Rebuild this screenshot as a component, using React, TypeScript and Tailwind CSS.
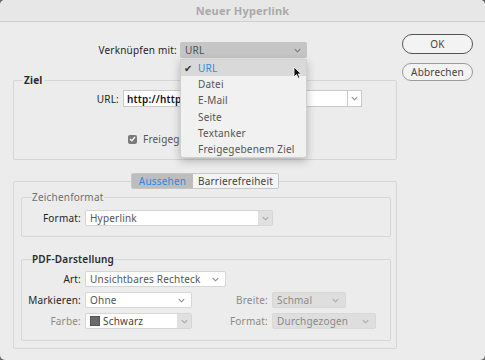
import type { ReactNode } from "react";

function Chevron({ className = "" }: { className?: string }) {
  return (
    <svg width="7" height="5" viewBox="0 0 7 5" className={className}>
      <path d="M0.8 1.2 L3.5 3.8 L6.2 1.2" fill="none" stroke="currentColor" strokeWidth="1.1" />
    </svg>
  );
}

function Select({
  width,
  children,
  arrowBox = false,
  disabled = false,
}: {
  width: string;
  children: ReactNode;
  arrowBox?: boolean;
  disabled?: boolean;
}) {
  return (
    <div
      className={`${width} h-[16px] flex items-center rounded-[2px] border ${
        disabled ? "bg-[#dedede] border-[#d8d8d8] text-[#8a8a8a]" : "bg-white border-[#d6d6d6] text-[#555]"
      }`}
    >
      <div className="flex-1 pl-[4px] flex items-center gap-[3px] truncate">{children}</div>
      {arrowBox ? (
        <div className="w-[14px] h-full bg-[#e0e0e0] flex items-center justify-center text-[#a5a5a5]">
          <Chevron />
        </div>
      ) : (
        <div className={`pr-[6px] flex items-center ${disabled ? "text-[#a9a9a9]" : "text-[#8c8c8c]"}`}>
          <Chevron />
        </div>
      )}
    </div>
  );
}

function Row({ label, gray = false, children }: { label: string; gray?: boolean; children: ReactNode }) {
  return (
    <div className="flex items-center h-[16px]">
      <span className={`w-[63px] text-right pr-[4px] ${gray ? "text-[#8a8a8a]" : "text-[#1f1f1f]"}`}>{label}</span>
      {children}
    </div>
  );
}

const menuItems = ["URL", "Datei", "E-Mail", "Seite", "Textanker", "Freigegebenem Ziel"];

export default function App() {
  return (
    <div className="w-[485px] h-[360px] bg-[#6a6a6a] font-['Noto_Sans',sans-serif] text-[10px] leading-[14px] tracking-[0.2px] text-[#1f1f1f]">
      <div className="h-full rounded-[5px] bg-[#ececec] overflow-hidden flex flex-col">
        <div className="h-[22px] shrink-0 border-b border-[#cfcfcf] bg-[#e7e7e7] flex items-center justify-center font-bold text-[11px] text-[#a9a9a9]">
          Neuer Hyperlink
        </div>

        <div className="flex flex-1 pl-[13px] pr-[12px]">
          <div className="w-[384px] flex flex-col">
            <div className="mt-[20px] flex items-center h-[16px]">
              <span className="w-[164px] text-right">Verknüpfen mit:</span>
              <div className="relative ml-[3px] w-[127px] h-[16px] rounded-[2px] bg-[#c5c5c5] flex items-center text-[#505050]">
                <span className="flex-1 pl-[5px]">URL</span>
                <Chevron className="mr-[6px] text-[#777]" />
                <div className="absolute left-0 top-[17px] w-[127px] h-[99px] bg-[#f1f1f1] border border-[#d0d0d0] rounded-b-[3px] shadow-[0_3px_8px_rgba(0,0,0,0.25)] z-10 flex flex-col">
                  {menuItems.map((item, i) => (
                    <div
                      key={item}
                      className={`h-[16.5px] flex items-center ${i === 0 ? "bg-[#d9d9d9] text-[#2b8be6]" : "text-[#555]"}`}
                    >
                      <span className="w-[17px] pl-[3px] text-[#333] text-[10px]">{i === 0 ? "✔" : ""}</span>
                      <span>{item}</span>
                    </div>
                  ))}
                  <svg width="9" height="13" viewBox="0 0 9 13" className="absolute left-[112px] top-[6px]">
                    <path d="M1 1 L1 11 L3.5 8.6 L5.2 12.2 L6.8 11.5 L5.2 8 L8.2 8 Z" fill="#111" stroke="#fff" strokeWidth="0.8" />
                  </svg>
                </div>
              </div>
            </div>

            <fieldset className="mt-[15px] h-[87px] border border-[#d6d6d6] rounded-[2px]">
              <legend className="ml-[9px] px-[1px] font-bold text-[#2a2a2a]">Ziel</legend>
              <div className="mt-[3px] flex items-center h-[17px]">
                <span className="w-[109px] text-right pr-[4px]">URL:</span>
                <div className="w-[225px] h-[17px] bg-white border border-[#c9c9c9] pl-[3px] flex items-center text-[#111] font-semibold">
                  http://http://
                </div>
                <div className="w-[14px] h-[17px] bg-white border border-l-0 border-[#c9c9c9] flex items-center justify-center text-[#8c8c8c]">
                  <Chevron />
                </div>
              </div>
              <div className="mt-[25px] pl-[114px] flex items-center gap-[6px] text-[#555]">
                <span className="w-[9px] h-[9px] rounded-[2px] bg-[#7a7a7a] flex items-center justify-center">
                  <svg width="7" height="6" viewBox="0 0 7 6">
                    <path d="M1 3 L2.8 4.8 L6 1" fill="none" stroke="#fff" strokeWidth="1.3" />
                  </svg>
                </span>
                <span>Freigegebenes Hyperlink-Ziel</span>
              </div>
            </fieldset>

            <fieldset className="mt-[13px] border border-[#d6d6d6] rounded-[2px] pb-[7px]">
              <legend className="mx-auto flex h-[16px] border border-[#c6c6c6] rounded-[2px] overflow-hidden">
                <span className="w-[61px] bg-[#bdbdbd] text-[#2b8be6] flex items-center justify-center">Aussehen</span>
                <span className="w-[85px] bg-[#f4f4f4] text-[#444] flex items-center justify-center">Barrierefreiheit</span>
              </legend>

              <fieldset className="mt-[1px] ml-[7px] w-[370px] border border-[#d6d6d6] rounded-[2px] pb-[10px]">
                <legend className="ml-[10px] text-[#6f6f6f]">Zeichenformat</legend>
                <div className="mt-[6px]">
                  <Row label="Format:">
                    <Select width="w-[188px]" arrowBox>
                      Hyperlink
                    </Select>
                  </Row>
                </div>
              </fieldset>

              <fieldset className="mt-[15px] ml-[7px] w-[370px] border border-[#d6d6d6] rounded-[2px] pb-[11px]">
                <legend className="ml-[10px] font-semibold text-[#2a2a2a]">PDF-Darstellung</legend>
                <div className="mt-[5px] flex flex-col gap-[5px]">
                  <Row label="Art:">
                    <Select width="w-[141px]">Unsichtbares Rechteck</Select>
                  </Row>
                  <div className="flex items-center">
                    <Row label="Markieren:">
                      <Select width="w-[107px]">Ohne</Select>
                    </Row>
                    <span className="w-[80px] text-right pr-[4px] text-[#8a8a8a]">Breite:</span>
                    <Select width="w-[74px]" disabled>
                      Schmal
                    </Select>
                  </div>
                  <div className="flex items-center">
                    <Row label="Farbe:" gray>
                      <Select width="w-[107px]" arrowBox>
                        <span className="w-[10px] h-[10px] bg-[#6b6b6b] border border-[#555]" />
                        <span className="text-[#444]">Schwarz</span>
                      </Select>
                    </Row>
                    <span className="w-[80px] text-right pr-[4px] text-[#8a8a8a]">Format:</span>
                    <Select width="w-[104px]" disabled>
                      Durchgezogen
                    </Select>
                  </div>
                </div>
              </fieldset>
            </fieldset>
          </div>

          <div className="ml-[5px] w-[71px] pt-[12px] flex flex-col gap-[9px]">
            <button className="h-[20px] rounded-full border-[1.5px] border-[#555] bg-[#f3f3f3] text-[#444]">OK</button>
            <button className="h-[18px] rounded-full border border-[#9a9a9a] bg-[#f3f3f3] text-[#444]">Abbrechen</button>
          </div>
        </div>
      </div>
    </div>
  );
}
